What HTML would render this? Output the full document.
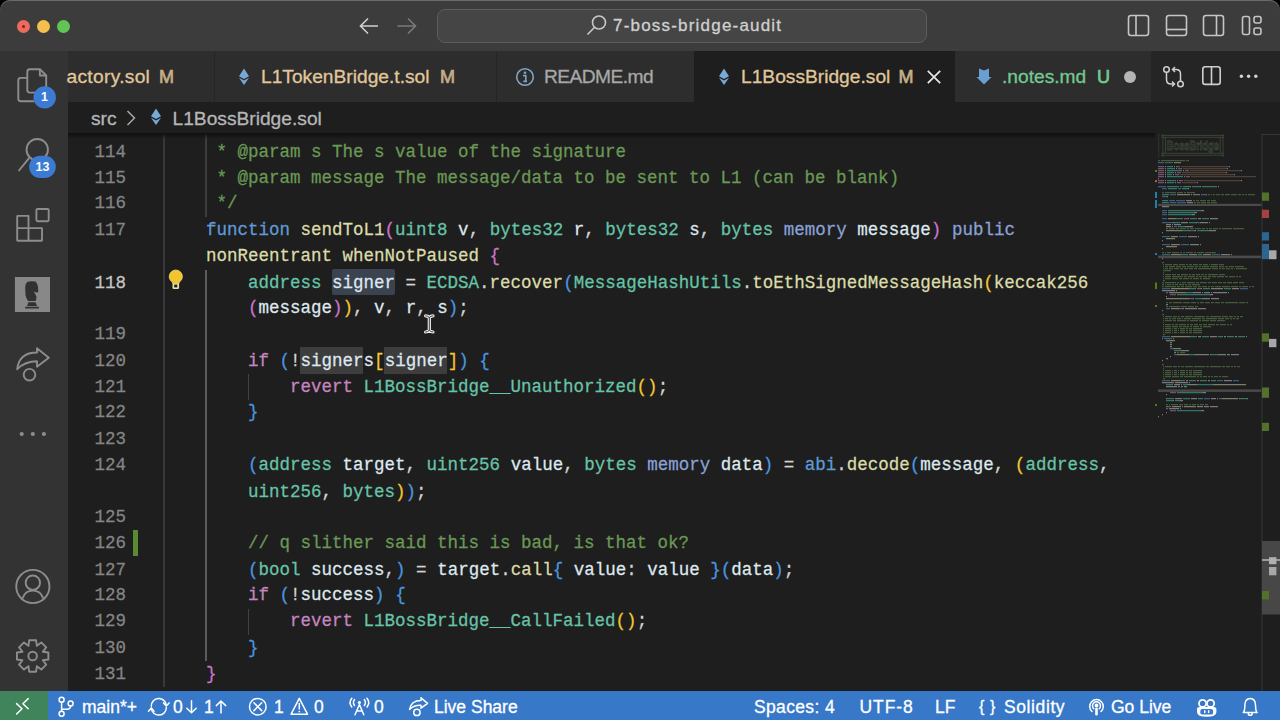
<!DOCTYPE html>
<html><head><meta charset="utf-8">
<style>
*{margin:0;padding:0;box-sizing:border-box}
html,body{width:1280px;height:720px;overflow:hidden;background:#000;font-family:"Liberation Sans",sans-serif}
.tab,#crumb,.st,#title div{-webkit-text-stroke:0.3px currentColor}
.code,.ln{-webkit-text-stroke:0.25px currentColor}
.abs{position:absolute}
#title{left:0;top:0;width:1280px;height:51px;background:#3c3c3c;border-radius:10px 10px 0 0;box-shadow:inset 0 1px 0 #6a6a6a}
#act{left:0;top:51px;width:68px;height:640px;background:#333333}
#tabs{left:68px;top:51px;width:1212px;height:51px;background:#252526}
.tab{position:absolute;top:0;height:51px;background:#2d2d2d;color:#e0c79b;font-size:19.2px;white-space:nowrap}
.tab .lbl{position:absolute;top:15px}
.tab .dm{font-size:18px;top:16px;-webkit-text-stroke:0.7px currentColor}
#crumb{left:68px;top:102px;width:1212px;height:32px;background:#1e1e1e;color:#b6b6b6;font-size:19.2px}
#editor{left:68px;top:134px;width:1212px;height:557px;background:#1e1e1e;overflow:hidden}
#shadow{left:68px;top:133px;width:1087px;height:6px;background:linear-gradient(#0f0f0f,rgba(15,15,15,0))}
#status{left:0;top:691px;width:1280px;height:29px;background:#3778c8;color:#fff;font-size:17.3px}
.code{position:absolute;left:96px;white-space:pre;font-family:"Liberation Mono",monospace;font-size:17.5px;line-height:23.727px;color:#d4d4d4;transform:scaleY(1.1);transform-origin:0 0}
.ln{position:absolute;left:0;white-space:pre;width:58px;text-align:right;font-family:"Liberation Mono",monospace;font-size:17.5px;line-height:23.727px;color:#858585;transform:scaleY(1.1);transform-origin:0 0}
.c{color:#6a9955}.k{color:#5f9bd6}.m{color:#8aa2d8}.t{color:#66c4a8}.f{color:#dcdcaa}.p{color:#c586c0}
.b1{color:#f2c830}.b2{color:#cc74cc}.b3{color:#4a96e0}.v{color:#dfe8ef}
.st{top:697px;color:#fff;font-size:17.5px;line-height:20px;white-space:pre}
.guide{position:absolute;width:1px;background:#404040}
.hl{background:#3a3d41;border-radius:2px}
</style></head><body>
<div id="title" class="abs">
<div class="abs" style="left:17px;top:20px;width:13px;height:13px;border-radius:50%;background:#ed6a5e"></div><div class="abs" style="left:21.8px;top:24.6px;width:3.4px;height:3.4px;border-radius:50%;background:#8c1c12"></div>
<div class="abs" style="left:37px;top:20px;width:13px;height:13px;border-radius:50%;background:#f4bf4f"></div>
<div class="abs" style="left:57px;top:20px;width:13px;height:13px;border-radius:50%;background:#61c554"></div>
<svg class="abs" style="left:358px;top:16px" width="22" height="20" viewBox="0 0 22 20"><path d="M20 10H3M10 2.5L2.5 10L10 17.5" stroke="#cfcfcf" stroke-width="1.6" fill="none"/></svg>
<svg class="abs" style="left:396px;top:16px" width="22" height="20" viewBox="0 0 22 20"><path d="M1.5 10H19M12 2.5L19.5 10L12 17.5" stroke="#7a7a7a" stroke-width="1.6" fill="none"/></svg>
<div class="abs" style="left:437px;top:8.5px;width:490px;height:34px;border-radius:8px;background:#454545;border:1px solid #5d5d5d"></div>
<svg class="abs" style="left:586px;top:14px" width="22" height="22" viewBox="0 0 22 22"><circle cx="13" cy="8.5" r="6.5" stroke="#c8c8c8" stroke-width="1.6" fill="none"/><path d="M8.6 13.2L1.5 20.5" stroke="#c8c8c8" stroke-width="1.6"/></svg>
<div class="abs" style="left:613px;top:15.5px;color:#d0d0d0;font-size:17px;letter-spacing:1.2px;white-space:nowrap">7-boss-bridge-audit</div>
<svg class="abs" style="left:1127px;top:14px" width="24" height="23" viewBox="0 0 24 23"><rect x="1.5" y="1.5" width="20" height="20" rx="2.5" stroke="#c5c5c5" stroke-width="1.6" fill="none"/><path d="M9 1.5V21.5" stroke="#c5c5c5" stroke-width="1.6"/></svg>
<svg class="abs" style="left:1165px;top:14px" width="24" height="23" viewBox="0 0 24 23"><rect x="1.5" y="1.5" width="20" height="20" rx="2.5" stroke="#c5c5c5" stroke-width="1.6" fill="none"/><path d="M1.5 15.5H21.5" stroke="#c5c5c5" stroke-width="1.6"/></svg>
<svg class="abs" style="left:1202px;top:14px" width="24" height="23" viewBox="0 0 24 23"><rect x="1.5" y="1.5" width="20" height="20" rx="2.5" stroke="#c5c5c5" stroke-width="1.6" fill="none"/><path d="M14.5 1.5V21.5" stroke="#c5c5c5" stroke-width="1.6"/></svg>
<svg class="abs" style="left:1241px;top:15px" width="23" height="22" viewBox="0 0 23 22"><rect x="1.5" y="1.5" width="7" height="18" rx="2" stroke="#c5c5c5" stroke-width="1.6" fill="none"/><rect x="13" y="1.5" width="7" height="6.5" rx="2" stroke="#c5c5c5" stroke-width="1.6" fill="none"/><rect x="13" y="13" width="7" height="6.5" rx="2" stroke="#c5c5c5" stroke-width="1.6" fill="none"/></svg>
</div>
<div id="act" class="abs"></div>
<svg class="abs" style="left:0;top:0" width="68" height="720" viewBox="0 0 68 720">
<g stroke="#8d8d8d" stroke-width="1.9" fill="none" stroke-linejoin="round">
<path d="M27.3 71.7Q27.3 69.2 29.8 69.2H39.9L46.2 75.5V90.1Q46.2 92.6 43.7 92.6H29.8Q27.3 92.6 27.3 90.1Z"/>
<path d="M39.9 69.2V75.5H46.2"/>
<path d="M27.3 77.9H20.8Q18.3 77.9 18.3 80.4V98.8Q18.3 101.3 20.8 101.3H34"/>
<circle cx="37.25" cy="149.65" r="10.7"/>
<path d="M29.3 157.9L18.6 171"/>
<path d="M17.2 216.4Q17.2 215.9 17.7 215.9H28.5V240.7H17.7Q17.2 240.7 17.2 240.2Z"/>
<path d="M17.2 228.1H42V240.2Q42 240.7 41.5 240.7H28.5"/>
<rect x="36.4" y="209" width="12.3" height="12.3" rx="1.2"/>
<path d="M17.2 369.2Q19 352.5 37 352.5V348.3L48.8 357.7L37 366.7V361.3Q25 361.3 17.2 369.2Z"/>
<circle cx="29.5" cy="374.7" r="5.8"/>
<circle cx="32.85" cy="586.5" r="16.6"/>
<circle cx="32.85" cy="582.7" r="7.2"/>
<path d="M22.5 598.3Q25 590.6 32.85 590.6Q40.7 590.6 43.2 598.3"/>
<path d="M29.17 640.28 L36.13 640.28 L36.86 645.84 L41.30 642.42 L46.23 647.35 L42.81 651.79 L48.37 652.52 L48.37 659.48 L42.81 660.21 L46.23 664.65 L41.30 669.58 L36.86 666.16 L36.13 671.72 L29.17 671.72 L28.44 666.16 L24.00 669.58 L19.07 664.65 L22.49 660.21 L16.93 659.48 L16.93 652.52 L22.49 651.79 L19.07 647.35 L24.00 642.42 L28.44 645.84Z"/>
<circle cx="32.65" cy="656" r="4.3"/>
</g>
<g fill="#8d8d8d"><circle cx="21.7" cy="434" r="2.1"/><circle cx="32.8" cy="434" r="2.1"/><circle cx="43.9" cy="434" r="2.1"/></g>
<rect x="14.9" y="277" width="35.1" height="35" fill="#888888"/>
<path d="M27.5 281.8Q31 280.6 35.5 281.6Q38 284 38.2 289.8L38.2 292Q37.5 292.6 36 292.4L33.5 291.6Q35 293.5 36.4 296.5Q36.6 299 35.6 301L28 301Q26 298 25.5 295L25.2 287Q25.4 283.5 27.5 281.8ZM28.4 302.3H35.5L37 305.9H27.1ZM25.2 306.8H38.9V308.5H25.2Z" fill="#313131"/>
<circle cx="44.7" cy="97.4" r="11.2" fill="#3b7bd3"/>
<rect x="29.1" y="155.7" width="26.7" height="22.2" rx="11.1" fill="#3b7bd3"/>
</svg>
<div class="abs" style="left:33px;top:88px;width:23px;text-align:center;color:#fff;font-size:12.5px;font-weight:bold;line-height:18px">1</div>
<div class="abs" style="left:29px;top:158px;width:27px;text-align:center;color:#fff;font-size:12.5px;font-weight:bold;line-height:18px">13</div>
<div id="tabs" class="abs">
<div class="tab" style="left:0;width:146px"><span class="lbl" style="left:-1.5px;letter-spacing:0.3px">actory.sol</span><span class="lbl dm" style="left:91px;color:#c5ae86">M</span></div>
<div class="tab" style="left:147px;width:281px"><svg class="abs" style="left:23px;top:17px" width="12" height="18" viewBox="0 0 12 18"><path d="M6 0.5L11 8.3L6 11L1 8.3Z" fill="#76a9d6"/><path d="M1 9.8L6 12.6L11 9.8L6 17Z" fill="#76a9d6"/></svg><span class="lbl" style="left:193px;display:none"></span><span class="lbl" style="left:46px">L1TokenBridge.t.sol</span><span class="lbl dm" style="left:225px;color:#c5ae86">M</span></div>
<div class="tab" style="left:429px;width:198px;color:#a8a8a8"><svg class="abs" style="left:18px;top:16px" width="20" height="20" viewBox="0 0 20 20"><circle cx="10" cy="10" r="8.3" stroke="#7fa4c6" stroke-width="1.6" fill="none"/><circle cx="10" cy="5.8" r="1.3" fill="#7fa4c6"/><path d="M8 8.6H10.8V14.2M8.3 14.4H12" stroke="#7fa4c6" stroke-width="1.6" fill="none"/></svg><span class="lbl" style="left:47px;letter-spacing:-0.55px">README.md</span></div>
<div class="tab" style="left:626px;width:261px;background:#1e1e1e"><svg class="abs" style="left:24px;top:17px" width="12" height="18" viewBox="0 0 12 18"><path d="M6 0.5L11 8.3L6 11L1 8.3Z" fill="#76a9d6"/><path d="M1 9.8L6 12.6L11 9.8L6 17Z" fill="#76a9d6"/></svg><span class="lbl" style="left:47px">L1BossBridge.sol</span><span class="lbl dm" style="left:204.5px;color:#c5ae86">M</span><svg class="abs" style="left:233px;top:19px" width="14" height="14" viewBox="0 0 14 14"><path d="M0.8 0.8L13.2 13.2M13.2 0.8L0.8 13.2" stroke="#e8e8e8" stroke-width="1.7"/></svg></div>
<div class="tab" style="left:887px;width:196px;color:#73c991"><svg class="abs" style="left:21px;top:17px" width="16" height="17" viewBox="0 0 16 17"><path d="M3 0.5L8 2.5L13 0.5V9H15.5L8 16.5L0.5 9H3Z" fill="#6a9fd2"/></svg><span class="lbl" style="left:47px">.notes.md</span><span class="lbl dm" style="left:142px;color:#73c991">U</span><div class="abs" style="left:169px;top:20px;width:12px;height:12px;border-radius:50%;background:#b5b5b5"></div></div>
<svg class="abs" style="left:1094px;top:14px" width="24" height="24" viewBox="0 0 24 24"><circle cx="4.5" cy="4.5" r="2.8" stroke="#cfcfcf" stroke-width="1.5" fill="none"/><circle cx="18.5" cy="19" r="2.8" stroke="#cfcfcf" stroke-width="1.5" fill="none"/><path d="M4.5 7.3V14.5Q4.5 19 9 19H12M10 16.5L12.5 19L10 21.5M18.5 16.2V9Q18.5 4.5 14 4.5H11M13 2L10.5 4.5L13 7" stroke="#cfcfcf" stroke-width="1.5" fill="none"/></svg>
<svg class="abs" style="left:1133px;top:14px" width="22" height="22" viewBox="0 0 22 22"><rect x="1.8" y="1.8" width="17.4" height="17.6" rx="2.5" stroke="#cfcfcf" stroke-width="1.6" fill="none"/><path d="M10.5 1.8V19.4" stroke="#cfcfcf" stroke-width="1.6"/></svg>
<svg class="abs" style="left:1170px;top:23px" width="22" height="5" viewBox="0 0 22 5"><circle cx="3.4" cy="2.3" r="1.7" fill="#d4d4d4"/><circle cx="10.6" cy="2.3" r="1.7" fill="#d4d4d4"/><circle cx="17.8" cy="2.3" r="1.7" fill="#d4d4d4"/></svg>
</div>
<div id="crumb" class="abs"><span class="abs" style="left:23px;top:6px">src</span><svg class="abs" style="left:57.5px;top:8px" width="10" height="16" viewBox="0 0 10 16"><path d="M1.5 1L8.5 8L1.5 15" stroke="#a9a9a9" stroke-width="1.5" fill="none"/></svg><svg class="abs" style="left:82px;top:6px" width="12" height="18" viewBox="0 0 12 18"><path d="M6 0.5L11 8.3L6 11L1 8.3Z" fill="#76a9d6"/><path d="M1 9.8L6 12.6L11 9.8L6 17Z" fill="#76a9d6"/></svg><span class="abs" style="left:104.5px;top:6px">L1BossBridge.sol</span></div>
<div id="editor" class="abs">
<div class="guide" style="left:95px;top:0;height:553px;width:2px;background:#383838"></div>
<div class="guide" style="left:137px;top:0;height:83.3px;width:1.5px;background:#3c3c3c"></div>
<div class="guide" style="left:137px;top:135.5px;height:391.5px;width:2px;background:#5c5c5c"></div>
<div class="guide" style="left:179.5px;top:239.9px;height:26.1px;width:1.5px;background:#424242"></div>
<div class="guide" style="left:179.5px;top:474.8px;height:26.1px;width:1.5px;background:#424242"></div>
<div class="abs" style="left:264.0px;top:134.9px;width:63.0px;height:26.6px;background:#3c4350;border-radius:2px"></div>
<div class="abs" style="left:231.8px;top:213.2px;width:63.0px;height:26.6px;background:#3d3d3e"></div>
<div class="abs" style="left:315.8px;top:213.2px;width:63.0px;height:26.6px;background:#3d3d3e"></div>
<div class="abs" style="left:65px;top:396.0px;width:5px;height:26px;background:#5a8a32"></div>

<div class="ln" style="top:5px">114
115
116
117

<span style="color:#c6c6c6">118</span>

119
120
121
122
123
124

125
126
127
128
129
130
131</div>
<div class="code" style="top:5px">     <span class="c">* @param s The s value of the signature</span>
     <span class="c">* @param message The message/data to be sent to L1 (can be blank)</span>
     <span class="c">*/</span>
    <span class="k">function</span> <span class="f">sendToL1</span><span class="b2">(</span><span class="t">uint8</span> <span class="v">v</span>, <span class="t">bytes32</span> <span class="v">r</span>, <span class="t">bytes32</span> <span class="v">s</span>, <span class="t">bytes</span> <span class="m">memory</span> <span class="v">message</span><span class="b2">)</span> <span class="m">public</span>
    <span class="f">nonReentrant</span> <span class="f">whenNotPaused</span> <span class="b2">{</span>
        <span class="t">address</span> <span class="v">signer</span> = <span class="t">ECDSA</span>.<span class="f">recover</span><span class="b3">(</span><span class="t">MessageHashUtils</span>.<span class="f">toEthSignedMessageHash</span><span class="b1">(</span><span class="f">keccak256</span>
        <span class="b2">(</span><span class="v">message</span><span class="b2">)</span><span class="b1">)</span>, <span class="v">v</span>, <span class="v">r</span>, <span class="v">s</span><span class="b3">)</span>;

        <span class="p">if</span> <span class="b3">(</span>!<span class="v">signer</span><span class="v">s</span><span class="b1">[</span><span class="v">signer</span><span class="b1">]</span><span class="b3">)</span> <span class="b3">{</span>
            <span class="p">revert</span> <span class="t">L1BossBridge__Unauthorized</span><span class="b1">()</span>;
        <span class="b3">}</span>

        <span class="b3">(</span><span class="t">address</span> <span class="v">target</span>, <span class="t">uint256</span> <span class="v">value</span>, <span class="t">bytes</span> <span class="m">memory</span> <span class="v">data</span><span class="b3">)</span> = <span class="k">abi</span>.<span class="f">decode</span><span class="b3">(</span><span class="v">message</span>, <span class="b1">(</span><span class="t">address</span>,
        <span class="t">uint256</span>, <span class="t">bytes</span><span class="b1">)</span><span class="b3">)</span>;

        <span class="c">// q slither said this is bad, is that ok?</span>
        <span class="b3">(</span><span class="t">bool</span> <span class="v">success</span>,<span class="b3">)</span> = <span class="v">target</span>.<span class="f">call</span><span class="b3">{</span> <span class="v">value</span>: <span class="v">value</span> <span class="b3">}</span><span class="b3">(</span><span class="v">data</span><span class="b3">)</span>;
        <span class="p">if</span> <span class="b3">(</span>!<span class="v">success</span><span class="b3">)</span> <span class="b3">{</span>
            <span class="p">revert</span> <span class="t">L1BossBridge__CallFailed</span><span class="b1">()</span>;
        <span class="b3">}</span>
    <span class="b2">}</span></div>
</div>
<svg class="abs" style="left:1150px;top:133px;opacity:0.5" width="112" height="290" viewBox="1150 133 112 290"><path fill="#6a9955" d="M1158.0 160.0h2.0v1.3h-2.0zM1161.0 160.0h24.0v1.3h-24.0zM1186.0 160.0h3.0v1.3h-3.0zM1162.0 192.0h2.0v1.3h-2.0zM1165.0 192.0h11.0v1.3h-11.0zM1177.0 192.0h6.0v1.3h-6.0zM1184.0 192.0h2.0v1.3h-2.0zM1187.0 192.0h8.0v1.3h-8.0zM1208.0 194.0h2.0v1.3h-2.0zM1211.0 194.0h1.0v1.3h-1.0zM1213.0 194.0h2.0v1.3h-2.0zM1216.0 194.0h4.0v1.3h-4.0zM1221.0 194.0h3.0v1.3h-3.0zM1225.0 194.0h5.0v1.3h-5.0zM1231.0 194.0h6.0v1.3h-6.0zM1238.0 194.0h3.0v1.3h-3.0zM1242.0 194.0h2.0v1.3h-2.0zM1245.0 194.0h2.0v1.3h-2.0zM1248.0 194.0h7.0v1.3h-7.0zM1193.0 200.0h2.0v1.3h-2.0zM1196.0 200.0h3.0v1.3h-3.0zM1200.0 200.0h6.0v1.3h-6.0zM1207.0 200.0h3.0v1.3h-3.0zM1211.0 200.0h5.0v1.3h-5.0zM1194.0 202.0h2.0v1.3h-2.0zM1197.0 202.0h3.0v1.3h-3.0zM1201.0 202.0h5.0v1.3h-5.0zM1207.0 202.0h3.0v1.3h-3.0zM1211.0 202.0h6.0v1.3h-6.0zM1220.0 204.0h2.0v1.3h-2.0zM1223.0 204.0h5.0v1.3h-5.0zM1229.0 204.0h3.0v1.3h-3.0zM1233.0 204.0h3.0v1.3h-3.0zM1237.0 204.0h4.0v1.3h-4.0zM1242.0 204.0h10.0v1.3h-10.0zM1253.0 204.0h2.0v1.3h-2.0zM1256.0 204.0h3.0v1.3h-3.0zM1166.0 228.0h2.0v1.3h-2.0zM1169.0 228.0h6.0v1.3h-6.0zM1176.0 228.0h3.0v1.3h-3.0zM1180.0 228.0h6.0v1.3h-6.0zM1187.0 228.0h2.0v1.3h-2.0zM1190.0 228.0h4.0v1.3h-4.0zM1195.0 228.0h6.0v1.3h-6.0zM1202.0 228.0h3.0v1.3h-3.0zM1206.0 228.0h2.0v1.3h-2.0zM1209.0 228.0h3.0v1.3h-3.0zM1213.0 228.0h5.0v1.3h-5.0zM1219.0 228.0h2.0v1.3h-2.0zM1222.0 228.0h10.0v1.3h-10.0zM1233.0 228.0h11.0v1.3h-11.0zM1162.0 252.0h2.0v1.3h-2.0zM1165.0 252.0h1.0v1.3h-1.0zM1167.0 252.0h4.0v1.3h-4.0zM1172.0 252.0h7.0v1.3h-7.0zM1180.0 252.0h2.0v1.3h-2.0zM1183.0 252.0h2.0v1.3h-2.0zM1186.0 252.0h7.0v1.3h-7.0zM1194.0 252.0h2.0v1.3h-2.0zM1197.0 252.0h7.0v1.3h-7.0zM1205.0 252.0h11.0v1.3h-11.0zM1162.0 262.0h2.0v1.3h-2.0zM1163.0 264.0h1.0v1.3h-1.0zM1165.0 264.0h7.0v1.3h-7.0zM1173.0 264.0h5.0v1.3h-5.0zM1179.0 264.0h6.0v1.3h-6.0zM1186.0 264.0h2.0v1.3h-2.0zM1189.0 264.0h3.0v1.3h-3.0zM1193.0 264.0h5.0v1.3h-5.0zM1199.0 264.0h3.0v1.3h-3.0zM1203.0 264.0h5.0v1.3h-5.0zM1209.0 264.0h1.0v1.3h-1.0zM1211.0 264.0h7.0v1.3h-7.0zM1219.0 264.0h5.0v1.3h-5.0zM1163.0 266.0h1.0v1.3h-1.0zM1165.0 266.0h3.0v1.3h-3.0zM1169.0 266.0h6.0v1.3h-6.0zM1176.0 266.0h5.0v1.3h-5.0zM1182.0 266.0h4.0v1.3h-4.0zM1187.0 266.0h7.0v1.3h-7.0zM1195.0 266.0h3.0v1.3h-3.0zM1199.0 266.0h2.0v1.3h-2.0zM1202.0 266.0h7.0v1.3h-7.0zM1210.0 266.0h8.0v1.3h-8.0zM1219.0 266.0h5.0v1.3h-5.0zM1225.0 266.0h3.0v1.3h-3.0zM1229.0 266.0h5.0v1.3h-5.0zM1235.0 266.0h9.0v1.3h-9.0zM1163.0 268.0h1.0v1.3h-1.0zM1165.0 268.0h3.0v1.3h-3.0zM1169.0 268.0h4.0v1.3h-4.0zM1174.0 268.0h5.0v1.3h-5.0zM1180.0 268.0h3.0v1.3h-3.0zM1184.0 268.0h4.0v1.3h-4.0zM1189.0 268.0h4.0v1.3h-4.0zM1194.0 268.0h3.0v1.3h-3.0zM1198.0 268.0h13.0v1.3h-13.0zM1212.0 268.0h6.0v1.3h-6.0zM1219.0 268.0h2.0v1.3h-2.0zM1222.0 268.0h3.0v1.3h-3.0zM1226.0 268.0h4.0v1.3h-4.0zM1231.0 268.0h2.0v1.3h-2.0zM1234.0 268.0h1.0v1.3h-1.0zM1236.0 268.0h11.0v1.3h-11.0zM1163.0 270.0h8.0v1.3h-8.0zM1163.0 272.0h1.0v1.3h-1.0zM1163.0 274.0h1.0v1.3h-1.0zM1165.0 274.0h6.0v1.3h-6.0zM1172.0 274.0h4.0v1.3h-4.0zM1177.0 274.0h3.0v1.3h-3.0zM1181.0 274.0h7.0v1.3h-7.0zM1189.0 274.0h2.0v1.3h-2.0zM1192.0 274.0h3.0v1.3h-3.0zM1196.0 274.0h4.0v1.3h-4.0zM1201.0 274.0h3.0v1.3h-3.0zM1205.0 274.0h2.0v1.3h-2.0zM1208.0 274.0h10.0v1.3h-10.0zM1219.0 274.0h6.0v1.3h-6.0zM1163.0 276.0h1.0v1.3h-1.0zM1165.0 276.0h6.0v1.3h-6.0zM1172.0 276.0h11.0v1.3h-11.0zM1184.0 276.0h3.0v1.3h-3.0zM1188.0 276.0h7.0v1.3h-7.0zM1196.0 276.0h2.0v1.3h-2.0zM1199.0 276.0h3.0v1.3h-3.0zM1203.0 276.0h4.0v1.3h-4.0zM1208.0 276.0h3.0v1.3h-3.0zM1212.0 276.0h4.0v1.3h-4.0zM1217.0 276.0h7.0v1.3h-7.0zM1225.0 276.0h3.0v1.3h-3.0zM1229.0 276.0h6.0v1.3h-6.0zM1236.0 276.0h2.0v1.3h-2.0zM1239.0 276.0h2.0v1.3h-2.0zM1163.0 278.0h1.0v1.3h-1.0zM1165.0 278.0h6.0v1.3h-6.0zM1172.0 278.0h6.0v1.3h-6.0zM1179.0 278.0h3.0v1.3h-3.0zM1183.0 278.0h6.0v1.3h-6.0zM1190.0 278.0h2.0v1.3h-2.0zM1193.0 278.0h6.0v1.3h-6.0zM1200.0 278.0h2.0v1.3h-2.0zM1203.0 278.0h7.0v1.3h-7.0zM1163.0 280.0h2.0v1.3h-2.0zM1162.0 282.0h2.0v1.3h-2.0zM1165.0 282.0h11.0v1.3h-11.0zM1177.0 282.0h2.0v1.3h-2.0zM1180.0 282.0h1.0v1.3h-1.0zM1182.0 282.0h4.0v1.3h-4.0zM1187.0 282.0h8.0v1.3h-8.0zM1196.0 282.0h3.0v1.3h-3.0zM1200.0 282.0h7.0v1.3h-7.0zM1208.0 282.0h3.0v1.3h-3.0zM1212.0 282.0h5.0v1.3h-5.0zM1218.0 282.0h4.0v1.3h-4.0zM1223.0 282.0h3.0v1.3h-3.0zM1227.0 282.0h5.0v1.3h-5.0zM1233.0 282.0h5.0v1.3h-5.0zM1239.0 282.0h5.0v1.3h-5.0zM1162.0 284.0h2.0v1.3h-2.0zM1165.0 284.0h1.0v1.3h-1.0zM1167.0 284.0h4.0v1.3h-4.0zM1172.0 284.0h2.0v1.3h-2.0zM1175.0 284.0h3.0v1.3h-3.0zM1179.0 284.0h5.0v1.3h-5.0zM1185.0 284.0h2.0v1.3h-2.0zM1188.0 284.0h3.0v1.3h-3.0zM1192.0 284.0h8.0v1.3h-8.0zM1162.0 286.0h2.0v1.3h-2.0zM1165.0 286.0h11.0v1.3h-11.0zM1177.0 286.0h3.0v1.3h-3.0zM1181.0 286.0h3.0v1.3h-3.0zM1185.0 286.0h7.0v1.3h-7.0zM1193.0 286.0h4.0v1.3h-4.0zM1198.0 286.0h3.0v1.3h-3.0zM1202.0 286.0h5.0v1.3h-5.0zM1208.0 286.0h2.0v1.3h-2.0zM1211.0 286.0h3.0v1.3h-3.0zM1215.0 286.0h6.0v1.3h-6.0zM1222.0 286.0h8.0v1.3h-8.0zM1231.0 286.0h7.0v1.3h-7.0zM1239.0 286.0h2.0v1.3h-2.0zM1242.0 286.0h6.0v1.3h-6.0zM1249.0 286.0h2.0v1.3h-2.0zM1252.0 286.0h2.0v1.3h-2.0zM1166.0 302.0h2.0v1.3h-2.0zM1169.0 302.0h3.0v1.3h-3.0zM1173.0 302.0h9.0v1.3h-9.0zM1183.0 302.0h7.0v1.3h-7.0zM1191.0 302.0h5.0v1.3h-5.0zM1197.0 302.0h2.0v1.3h-2.0zM1200.0 302.0h4.0v1.3h-4.0zM1205.0 302.0h5.0v1.3h-5.0zM1211.0 302.0h3.0v1.3h-3.0zM1215.0 302.0h5.0v1.3h-5.0zM1221.0 302.0h3.0v1.3h-3.0zM1225.0 302.0h13.0v1.3h-13.0zM1239.0 302.0h6.0v1.3h-6.0zM1246.0 302.0h2.0v1.3h-2.0zM1166.0 306.0h2.0v1.3h-2.0zM1169.0 306.0h11.0v1.3h-11.0zM1181.0 306.0h6.0v1.3h-6.0zM1188.0 306.0h6.0v1.3h-6.0zM1195.0 306.0h3.0v1.3h-3.0zM1162.0 314.0h2.0v1.3h-2.0zM1163.0 316.0h1.0v1.3h-1.0zM1165.0 316.0h7.0v1.3h-7.0zM1173.0 316.0h4.0v1.3h-4.0zM1178.0 316.0h2.0v1.3h-2.0zM1181.0 316.0h3.0v1.3h-3.0zM1185.0 316.0h8.0v1.3h-8.0zM1194.0 316.0h11.0v1.3h-11.0zM1206.0 316.0h3.0v1.3h-3.0zM1210.0 316.0h11.0v1.3h-11.0zM1222.0 316.0h6.0v1.3h-6.0zM1229.0 316.0h4.0v1.3h-4.0zM1234.0 316.0h2.0v1.3h-2.0zM1237.0 316.0h2.0v1.3h-2.0zM1240.0 316.0h3.0v1.3h-3.0zM1163.0 318.0h1.0v1.3h-1.0zM1165.0 318.0h3.0v1.3h-3.0zM1169.0 318.0h2.0v1.3h-2.0zM1172.0 318.0h4.0v1.3h-4.0zM1177.0 318.0h4.0v1.3h-4.0zM1182.0 318.0h1.0v1.3h-1.0zM1184.0 318.0h7.0v1.3h-7.0zM1192.0 318.0h9.0v1.3h-9.0zM1202.0 318.0h3.0v1.3h-3.0zM1206.0 318.0h11.0v1.3h-11.0zM1218.0 318.0h6.0v1.3h-6.0zM1225.0 318.0h4.0v1.3h-4.0zM1230.0 318.0h2.0v1.3h-2.0zM1233.0 318.0h2.0v1.3h-2.0zM1236.0 318.0h3.0v1.3h-3.0zM1163.0 320.0h1.0v1.3h-1.0zM1165.0 320.0h7.0v1.3h-7.0zM1173.0 320.0h3.0v1.3h-3.0zM1177.0 320.0h9.0v1.3h-9.0zM1187.0 320.0h2.0v1.3h-2.0zM1190.0 320.0h8.0v1.3h-8.0zM1199.0 320.0h2.0v1.3h-2.0zM1202.0 320.0h7.0v1.3h-7.0zM1210.0 320.0h6.0v1.3h-6.0zM1217.0 320.0h8.0v1.3h-8.0zM1163.0 322.0h1.0v1.3h-1.0zM1163.0 324.0h1.0v1.3h-1.0zM1165.0 324.0h6.0v1.3h-6.0zM1172.0 324.0h2.0v1.3h-2.0zM1175.0 324.0h3.0v1.3h-3.0zM1179.0 324.0h7.0v1.3h-7.0zM1187.0 324.0h2.0v1.3h-2.0zM1190.0 324.0h3.0v1.3h-3.0zM1194.0 324.0h4.0v1.3h-4.0zM1199.0 324.0h3.0v1.3h-3.0zM1203.0 324.0h4.0v1.3h-4.0zM1208.0 324.0h7.0v1.3h-7.0zM1216.0 324.0h3.0v1.3h-3.0zM1220.0 324.0h6.0v1.3h-6.0zM1227.0 324.0h2.0v1.3h-2.0zM1230.0 324.0h2.0v1.3h-2.0zM1163.0 326.0h1.0v1.3h-1.0zM1165.0 326.0h6.0v1.3h-6.0zM1172.0 326.0h6.0v1.3h-6.0zM1179.0 326.0h3.0v1.3h-3.0zM1183.0 326.0h6.0v1.3h-6.0zM1190.0 326.0h2.0v1.3h-2.0zM1193.0 326.0h6.0v1.3h-6.0zM1200.0 326.0h2.0v1.3h-2.0zM1203.0 326.0h8.0v1.3h-8.0zM1163.0 328.0h1.0v1.3h-1.0zM1165.0 328.0h6.0v1.3h-6.0zM1172.0 328.0h1.0v1.3h-1.0zM1174.0 328.0h3.0v1.3h-3.0zM1178.0 328.0h1.0v1.3h-1.0zM1180.0 328.0h5.0v1.3h-5.0zM1186.0 328.0h2.0v1.3h-2.0zM1189.0 328.0h3.0v1.3h-3.0zM1193.0 328.0h9.0v1.3h-9.0zM1163.0 330.0h1.0v1.3h-1.0zM1165.0 330.0h6.0v1.3h-6.0zM1172.0 330.0h1.0v1.3h-1.0zM1174.0 330.0h3.0v1.3h-3.0zM1178.0 330.0h1.0v1.3h-1.0zM1180.0 330.0h5.0v1.3h-5.0zM1186.0 330.0h2.0v1.3h-2.0zM1189.0 330.0h3.0v1.3h-3.0zM1193.0 330.0h9.0v1.3h-9.0zM1163.0 332.0h1.0v1.3h-1.0zM1165.0 332.0h6.0v1.3h-6.0zM1172.0 332.0h1.0v1.3h-1.0zM1174.0 332.0h3.0v1.3h-3.0zM1178.0 332.0h1.0v1.3h-1.0zM1180.0 332.0h5.0v1.3h-5.0zM1186.0 332.0h2.0v1.3h-2.0zM1189.0 332.0h3.0v1.3h-3.0zM1193.0 332.0h9.0v1.3h-9.0zM1163.0 334.0h2.0v1.3h-2.0zM1177.0 352.0h2.0v1.3h-2.0zM1180.0 352.0h5.0v1.3h-5.0zM1162.0 364.0h2.0v1.3h-2.0zM1163.0 366.0h1.0v1.3h-1.0zM1165.0 366.0h7.0v1.3h-7.0zM1173.0 366.0h4.0v1.3h-4.0zM1178.0 366.0h2.0v1.3h-2.0zM1181.0 366.0h3.0v1.3h-3.0zM1185.0 366.0h8.0v1.3h-8.0zM1194.0 366.0h11.0v1.3h-11.0zM1206.0 366.0h3.0v1.3h-3.0zM1210.0 366.0h11.0v1.3h-11.0zM1222.0 366.0h3.0v1.3h-3.0zM1226.0 366.0h4.0v1.3h-4.0zM1231.0 366.0h2.0v1.3h-2.0zM1234.0 366.0h2.0v1.3h-2.0zM1237.0 366.0h3.0v1.3h-3.0zM1163.0 368.0h1.0v1.3h-1.0zM1163.0 370.0h1.0v1.3h-1.0zM1165.0 370.0h6.0v1.3h-6.0zM1172.0 370.0h1.0v1.3h-1.0zM1174.0 370.0h3.0v1.3h-3.0zM1178.0 370.0h1.0v1.3h-1.0zM1180.0 370.0h5.0v1.3h-5.0zM1186.0 370.0h2.0v1.3h-2.0zM1189.0 370.0h3.0v1.3h-3.0zM1193.0 370.0h9.0v1.3h-9.0zM1163.0 372.0h1.0v1.3h-1.0zM1165.0 372.0h6.0v1.3h-6.0zM1172.0 372.0h1.0v1.3h-1.0zM1174.0 372.0h3.0v1.3h-3.0zM1178.0 372.0h1.0v1.3h-1.0zM1180.0 372.0h5.0v1.3h-5.0zM1186.0 372.0h2.0v1.3h-2.0zM1189.0 372.0h3.0v1.3h-3.0zM1193.0 372.0h9.0v1.3h-9.0zM1163.0 374.0h1.0v1.3h-1.0zM1165.0 374.0h6.0v1.3h-6.0zM1172.0 374.0h1.0v1.3h-1.0zM1174.0 374.0h3.0v1.3h-3.0zM1178.0 374.0h1.0v1.3h-1.0zM1180.0 374.0h5.0v1.3h-5.0zM1186.0 374.0h2.0v1.3h-2.0zM1189.0 374.0h3.0v1.3h-3.0zM1193.0 374.0h9.0v1.3h-9.0zM1163.0 376.0h1.0v1.3h-1.0zM1165.0 376.0h6.0v1.3h-6.0zM1172.0 376.0h7.0v1.3h-7.0zM1180.0 376.0h3.0v1.3h-3.0zM1184.0 376.0h12.0v1.3h-12.0zM1197.0 376.0h2.0v1.3h-2.0zM1200.0 376.0h2.0v1.3h-2.0zM1203.0 376.0h4.0v1.3h-4.0zM1208.0 376.0h2.0v1.3h-2.0zM1211.0 376.0h2.0v1.3h-2.0zM1214.0 376.0h4.0v1.3h-4.0zM1219.0 376.0h2.0v1.3h-2.0zM1222.0 376.0h6.0v1.3h-6.0zM1163.0 378.0h2.0v1.3h-2.0zM1166.0 404.0h2.0v1.3h-2.0zM1169.0 404.0h1.0v1.3h-1.0zM1171.0 404.0h7.0v1.3h-7.0zM1179.0 404.0h4.0v1.3h-4.0zM1184.0 404.0h4.0v1.3h-4.0zM1189.0 404.0h2.0v1.3h-2.0zM1192.0 404.0h4.0v1.3h-4.0zM1197.0 404.0h2.0v1.3h-2.0zM1200.0 404.0h4.0v1.3h-4.0zM1205.0 404.0h3.0v1.3h-3.0z"/><path fill="#569cd6" d="M1158.0 162.0h6.0v1.3h-6.0zM1165.0 162.0h8.0v1.3h-8.0zM1158.0 186.0h8.0v1.3h-8.0zM1180.0 186.0h2.0v1.3h-2.0zM1162.0 188.0h5.0v1.3h-5.0zM1178.0 188.0h3.0v1.3h-3.0zM1170.0 194.0h6.0v1.3h-6.0zM1201.0 194.0h5.0v1.3h-5.0zM1162.0 196.0h5.0v1.3h-5.0zM1169.0 200.0h6.0v1.3h-6.0zM1176.0 200.0h9.0v1.3h-9.0zM1170.0 202.0h6.0v1.3h-6.0zM1177.0 202.0h9.0v1.3h-9.0zM1162.0 204.0h7.0v1.3h-7.0zM1204.0 204.0h6.0v1.3h-6.0zM1162.0 210.0h5.0v1.3h-5.0zM1162.0 212.0h5.0v1.3h-5.0zM1162.0 214.0h5.0v1.3h-5.0zM1162.0 218.0h5.0v1.3h-5.0zM1162.0 222.0h11.0v1.3h-11.0zM1197.0 222.0h3.0v1.3h-3.0zM1174.0 226.0h3.0v1.3h-3.0zM1190.0 230.0h4.0v1.3h-4.0zM1197.0 230.0h4.0v1.3h-4.0zM1162.0 236.0h8.0v1.3h-8.0zM1179.0 236.0h8.0v1.3h-8.0zM1162.0 244.0h8.0v1.3h-8.0zM1181.0 244.0h8.0v1.3h-8.0zM1162.0 254.0h8.0v1.3h-8.0zM1212.0 254.0h8.0v1.3h-8.0zM1162.0 288.0h8.0v1.3h-8.0zM1240.0 288.0h8.0v1.3h-8.0zM1166.0 308.0h4.0v1.3h-4.0zM1162.0 336.0h8.0v1.3h-8.0zM1164.0 338.0h8.0v1.3h-8.0zM1170.0 348.0h3.0v1.3h-3.0zM1174.0 354.0h3.0v1.3h-3.0zM1162.0 380.0h8.0v1.3h-8.0zM1217.0 380.0h6.0v1.3h-6.0zM1233.0 380.0h6.0v1.3h-6.0zM1204.0 398.0h6.0v1.3h-6.0zM1219.0 398.0h3.0v1.3h-3.0z"/><path fill="#b5cea8" d="M1174.0 162.0h6.0v1.3h-6.0zM1193.0 194.0h7.0v1.3h-7.0zM1174.0 352.0h1.0v1.3h-1.0z"/><path fill="#d4d4d4" d="M1180.0 162.0h1.0v1.3h-1.0zM1165.0 166.0h1.0v1.3h-1.0zM1174.0 166.0h1.0v1.3h-1.0zM1229.0 166.0h1.0v1.3h-1.0zM1165.0 168.0h1.0v1.3h-1.0zM1176.0 168.0h1.0v1.3h-1.0zM1227.0 168.0h1.0v1.3h-1.0zM1165.0 170.0h1.0v1.3h-1.0zM1183.0 170.0h1.0v1.3h-1.0zM1241.0 170.0h1.0v1.3h-1.0zM1165.0 172.0h1.0v1.3h-1.0zM1175.0 172.0h1.0v1.3h-1.0zM1226.0 172.0h1.0v1.3h-1.0zM1165.0 174.0h1.0v1.3h-1.0zM1173.0 174.0h1.0v1.3h-1.0zM1234.0 174.0h1.0v1.3h-1.0zM1165.0 176.0h1.0v1.3h-1.0zM1184.0 176.0h1.0v1.3h-1.0zM1158.0 178.0h1.0v1.3h-1.0zM1165.0 180.0h1.0v1.3h-1.0zM1177.0 180.0h1.0v1.3h-1.0zM1241.0 180.0h1.0v1.3h-1.0zM1165.0 182.0h1.0v1.3h-1.0zM1175.0 182.0h1.0v1.3h-1.0zM1197.0 182.0h1.0v1.3h-1.0zM1190.0 186.0h1.0v1.3h-1.0zM1200.0 186.0h1.0v1.3h-1.0zM1218.0 186.0h1.0v1.3h-1.0zM1188.0 188.0h1.0v1.3h-1.0zM1191.0 194.0h1.0v1.3h-1.0zM1206.0 194.0h1.0v1.3h-1.0zM1167.0 196.0h1.0v1.3h-1.0zM1191.0 200.0h1.0v1.3h-1.0zM1192.0 202.0h1.0v1.3h-1.0zM1169.0 204.0h1.0v1.3h-1.0zM1186.0 204.0h2.0v1.3h-2.0zM1202.0 204.0h1.0v1.3h-1.0zM1218.0 204.0h1.0v1.3h-1.0zM1168.0 206.0h1.0v1.3h-1.0zM1201.0 210.0h3.0v1.3h-3.0zM1194.0 212.0h3.0v1.3h-3.0zM1192.0 214.0h3.0v1.3h-3.0zM1175.0 218.0h1.0v1.3h-1.0zM1188.0 218.0h1.0v1.3h-1.0zM1200.0 218.0h1.0v1.3h-1.0zM1216.0 218.0h2.0v1.3h-2.0zM1173.0 222.0h1.0v1.3h-1.0zM1187.0 222.0h1.0v1.3h-1.0zM1196.0 222.0h1.0v1.3h-1.0zM1200.0 222.0h1.0v1.3h-1.0zM1207.0 222.0h1.0v1.3h-1.0zM1209.0 222.0h1.0v1.3h-1.0zM1172.0 224.0h1.0v1.3h-1.0zM1180.0 224.0h1.0v1.3h-1.0zM1172.0 226.0h1.0v1.3h-1.0zM1185.0 226.0h1.0v1.3h-1.0zM1191.0 226.0h2.0v1.3h-2.0zM1171.0 230.0h1.0v1.3h-1.0zM1181.0 230.0h1.0v1.3h-1.0zM1189.0 230.0h1.0v1.3h-1.0zM1194.0 230.0h2.0v1.3h-2.0zM1201.0 230.0h1.0v1.3h-1.0zM1209.0 230.0h2.0v1.3h-2.0zM1214.0 230.0h2.0v1.3h-2.0zM1162.0 232.0h1.0v1.3h-1.0zM1176.0 236.0h2.0v1.3h-2.0zM1198.0 236.0h1.0v1.3h-1.0zM1172.0 238.0h3.0v1.3h-3.0zM1162.0 240.0h1.0v1.3h-1.0zM1178.0 244.0h2.0v1.3h-2.0zM1200.0 244.0h1.0v1.3h-1.0zM1174.0 246.0h3.0v1.3h-3.0zM1162.0 248.0h1.0v1.3h-1.0zM1180.0 254.0h1.0v1.3h-1.0zM1196.0 254.0h1.0v1.3h-1.0zM1210.0 254.0h1.0v1.3h-1.0zM1231.0 254.0h1.0v1.3h-1.0zM1173.0 256.0h1.0v1.3h-1.0zM1181.0 256.0h1.0v1.3h-1.0zM1183.0 256.0h1.0v1.3h-1.0zM1192.0 256.0h1.0v1.3h-1.0zM1162.0 258.0h1.0v1.3h-1.0zM1188.0 288.0h1.0v1.3h-1.0zM1201.0 288.0h1.0v1.3h-1.0zM1222.0 288.0h1.0v1.3h-1.0zM1238.0 288.0h1.0v1.3h-1.0zM1176.0 290.0h1.0v1.3h-1.0zM1169.0 292.0h1.0v1.3h-1.0zM1175.0 292.0h1.0v1.3h-1.0zM1185.0 292.0h1.0v1.3h-1.0zM1193.0 292.0h1.0v1.3h-1.0zM1199.0 292.0h2.0v1.3h-2.0zM1202.0 292.0h1.0v1.3h-1.0zM1211.0 292.0h1.0v1.3h-1.0zM1226.0 292.0h1.0v1.3h-1.0zM1228.0 292.0h1.0v1.3h-1.0zM1210.0 294.0h3.0v1.3h-3.0zM1166.0 296.0h1.0v1.3h-1.0zM1171.0 298.0h1.0v1.3h-1.0zM1188.0 298.0h1.0v1.3h-1.0zM1193.0 298.0h1.0v1.3h-1.0zM1202.0 298.0h1.0v1.3h-1.0zM1208.0 298.0h2.0v1.3h-2.0zM1217.0 298.0h2.0v1.3h-2.0zM1178.0 308.0h1.0v1.3h-1.0zM1183.0 308.0h1.0v1.3h-1.0zM1196.0 308.0h1.0v1.3h-1.0zM1204.0 308.0h2.0v1.3h-2.0zM1162.0 310.0h1.0v1.3h-1.0zM1189.0 336.0h1.0v1.3h-1.0zM1200.0 336.0h1.0v1.3h-1.0zM1216.0 336.0h1.0v1.3h-1.0zM1225.0 336.0h1.0v1.3h-1.0zM1236.0 336.0h1.0v1.3h-1.0zM1162.0 338.0h1.0v1.3h-1.0zM1173.0 338.0h1.0v1.3h-1.0zM1174.0 340.0h1.0v1.3h-1.0zM1171.0 342.0h1.0v1.3h-1.0zM1171.0 344.0h1.0v1.3h-1.0zM1171.0 346.0h1.0v1.3h-1.0zM1173.0 348.0h1.0v1.3h-1.0zM1180.0 348.0h1.0v1.3h-1.0zM1181.0 350.0h1.0v1.3h-1.0zM1187.0 350.0h2.0v1.3h-2.0zM1175.0 352.0h1.0v1.3h-1.0zM1177.0 354.0h1.0v1.3h-1.0zM1188.0 354.0h1.0v1.3h-1.0zM1195.0 354.0h1.0v1.3h-1.0zM1208.0 354.0h1.0v1.3h-1.0zM1210.0 354.0h1.0v1.3h-1.0zM1218.0 354.0h1.0v1.3h-1.0zM1224.0 354.0h2.0v1.3h-2.0zM1229.0 354.0h1.0v1.3h-1.0zM1237.0 354.0h2.0v1.3h-2.0zM1170.0 356.0h1.0v1.3h-1.0zM1166.0 358.0h2.0v1.3h-2.0zM1162.0 360.0h1.0v1.3h-1.0zM1179.0 380.0h1.0v1.3h-1.0zM1187.0 380.0h1.0v1.3h-1.0zM1198.0 380.0h1.0v1.3h-1.0zM1209.0 380.0h1.0v1.3h-1.0zM1231.0 380.0h1.0v1.3h-1.0zM1189.0 382.0h1.0v1.3h-1.0zM1181.0 384.0h1.0v1.3h-1.0zM1188.0 384.0h1.0v1.3h-1.0zM1196.0 384.0h1.0v1.3h-1.0zM1213.0 384.0h1.0v1.3h-1.0zM1236.0 384.0h1.0v1.3h-1.0zM1166.0 386.0h1.0v1.3h-1.0zM1174.0 386.0h3.0v1.3h-3.0zM1179.0 386.0h1.0v1.3h-1.0zM1182.0 386.0h1.0v1.3h-1.0zM1185.0 386.0h2.0v1.3h-2.0zM1169.0 390.0h2.0v1.3h-2.0zM1178.0 390.0h1.0v1.3h-1.0zM1185.0 390.0h2.0v1.3h-2.0zM1188.0 390.0h1.0v1.3h-1.0zM1203.0 392.0h3.0v1.3h-3.0zM1166.0 394.0h1.0v1.3h-1.0zM1166.0 398.0h1.0v1.3h-1.0zM1181.0 398.0h1.0v1.3h-1.0zM1196.0 398.0h1.0v1.3h-1.0zM1215.0 398.0h1.0v1.3h-1.0zM1217.0 398.0h1.0v1.3h-1.0zM1222.0 398.0h1.0v1.3h-1.0zM1229.0 398.0h1.0v1.3h-1.0zM1237.0 398.0h1.0v1.3h-1.0zM1239.0 398.0h1.0v1.3h-1.0zM1247.0 398.0h1.0v1.3h-1.0zM1173.0 400.0h1.0v1.3h-1.0zM1180.0 400.0h3.0v1.3h-3.0zM1166.0 406.0h1.0v1.3h-1.0zM1179.0 406.0h2.0v1.3h-2.0zM1182.0 406.0h1.0v1.3h-1.0zM1190.0 406.0h1.0v1.3h-1.0zM1195.0 406.0h1.0v1.3h-1.0zM1202.0 406.0h1.0v1.3h-1.0zM1210.0 406.0h2.0v1.3h-2.0zM1216.0 406.0h2.0v1.3h-2.0zM1169.0 408.0h2.0v1.3h-2.0zM1178.0 408.0h1.0v1.3h-1.0zM1180.0 408.0h1.0v1.3h-1.0zM1201.0 410.0h3.0v1.3h-3.0zM1166.0 412.0h1.0v1.3h-1.0zM1162.0 414.0h1.0v1.3h-1.0zM1158.0 416.0h1.0v1.3h-1.0z"/><path fill="#c586c0" d="M1158.0 166.0h6.0v1.3h-6.0zM1176.0 166.0h4.0v1.3h-4.0zM1158.0 168.0h6.0v1.3h-6.0zM1178.0 168.0h4.0v1.3h-4.0zM1158.0 170.0h6.0v1.3h-6.0zM1185.0 170.0h4.0v1.3h-4.0zM1158.0 172.0h6.0v1.3h-6.0zM1177.0 172.0h4.0v1.3h-4.0zM1158.0 174.0h6.0v1.3h-6.0zM1175.0 174.0h4.0v1.3h-4.0zM1158.0 176.0h6.0v1.3h-6.0zM1186.0 176.0h4.0v1.3h-4.0zM1158.0 180.0h6.0v1.3h-6.0zM1179.0 180.0h4.0v1.3h-4.0zM1158.0 182.0h6.0v1.3h-6.0zM1177.0 182.0h4.0v1.3h-4.0zM1184.0 218.0h4.0v1.3h-4.0zM1197.0 288.0h4.0v1.3h-4.0zM1166.0 292.0h2.0v1.3h-2.0zM1170.0 294.0h6.0v1.3h-6.0zM1189.0 298.0h4.0v1.3h-4.0zM1179.0 308.0h4.0v1.3h-4.0zM1166.0 390.0h2.0v1.3h-2.0zM1170.0 392.0h6.0v1.3h-6.0zM1166.0 408.0h2.0v1.3h-2.0zM1170.0 410.0h6.0v1.3h-6.0z"/><path fill="#4ec9b0" d="M1167.0 166.0h6.0v1.3h-6.0zM1167.0 168.0h8.0v1.3h-8.0zM1167.0 170.0h15.0v1.3h-15.0zM1167.0 172.0h7.0v1.3h-7.0zM1167.0 174.0h5.0v1.3h-5.0zM1167.0 176.0h16.0v1.3h-16.0zM1167.0 180.0h9.0v1.3h-9.0zM1167.0 182.0h7.0v1.3h-7.0zM1167.0 186.0h12.0v1.3h-12.0zM1183.0 186.0h7.0v1.3h-7.0zM1192.0 186.0h8.0v1.3h-8.0zM1202.0 186.0h15.0v1.3h-15.0zM1168.0 188.0h9.0v1.3h-9.0zM1182.0 188.0h6.0v1.3h-6.0zM1162.0 194.0h7.0v1.3h-7.0zM1162.0 200.0h6.0v1.3h-6.0zM1162.0 202.0h7.0v1.3h-7.0zM1170.0 204.0h7.0v1.3h-7.0zM1189.0 204.0h4.0v1.3h-4.0zM1168.0 210.0h33.0v1.3h-33.0zM1168.0 212.0h26.0v1.3h-26.0zM1168.0 214.0h24.0v1.3h-24.0zM1176.0 218.0h7.0v1.3h-7.0zM1190.0 218.0h7.0v1.3h-7.0zM1202.0 218.0h7.0v1.3h-7.0zM1174.0 222.0h6.0v1.3h-6.0zM1189.0 222.0h7.0v1.3h-7.0zM1178.0 226.0h7.0v1.3h-7.0zM1182.0 230.0h7.0v1.3h-7.0zM1202.0 230.0h7.0v1.3h-7.0zM1181.0 254.0h7.0v1.3h-7.0zM1198.0 254.0h4.0v1.3h-4.0zM1189.0 288.0h7.0v1.3h-7.0zM1203.0 288.0h7.0v1.3h-7.0zM1224.0 288.0h7.0v1.3h-7.0zM1186.0 292.0h7.0v1.3h-7.0zM1177.0 294.0h33.0v1.3h-33.0zM1195.0 298.0h7.0v1.3h-7.0zM1190.0 336.0h7.0v1.3h-7.0zM1202.0 336.0h7.0v1.3h-7.0zM1218.0 336.0h5.0v1.3h-5.0zM1227.0 336.0h7.0v1.3h-7.0zM1238.0 336.0h7.0v1.3h-7.0zM1174.0 350.0h7.0v1.3h-7.0zM1189.0 354.0h6.0v1.3h-6.0zM1211.0 354.0h7.0v1.3h-7.0zM1180.0 380.0h5.0v1.3h-5.0zM1189.0 380.0h7.0v1.3h-7.0zM1200.0 380.0h7.0v1.3h-7.0zM1211.0 380.0h5.0v1.3h-5.0zM1166.0 384.0h7.0v1.3h-7.0zM1183.0 384.0h5.0v1.3h-5.0zM1197.0 384.0h16.0v1.3h-16.0zM1177.0 392.0h26.0v1.3h-26.0zM1167.0 398.0h7.0v1.3h-7.0zM1183.0 398.0h7.0v1.3h-7.0zM1198.0 398.0h5.0v1.3h-5.0zM1240.0 398.0h7.0v1.3h-7.0zM1166.0 400.0h7.0v1.3h-7.0zM1175.0 400.0h5.0v1.3h-5.0zM1167.0 406.0h4.0v1.3h-4.0zM1177.0 410.0h24.0v1.3h-24.0z"/><path fill="#7f6250" d="M1181.0 166.0h48.0v1.3h-48.0zM1183.0 168.0h44.0v1.3h-44.0zM1190.0 170.0h51.0v1.3h-51.0zM1182.0 172.0h44.0v1.3h-44.0zM1180.0 174.0h54.0v1.3h-54.0zM1191.0 176.0h65.0v1.3h-65.0zM1184.0 180.0h57.0v1.3h-57.0zM1182.0 182.0h15.0v1.3h-15.0z"/><path fill="#d4d4d4" d="M1177.0 194.0h13.0v1.3h-13.0zM1186.0 200.0h5.0v1.3h-5.0zM1187.0 202.0h5.0v1.3h-5.0zM1178.0 204.0h7.0v1.3h-7.0zM1194.0 204.0h8.0v1.3h-8.0zM1211.0 204.0h7.0v1.3h-7.0zM1162.0 206.0h6.0v1.3h-6.0zM1198.0 218.0h2.0v1.3h-2.0zM1210.0 218.0h6.0v1.3h-6.0zM1181.0 222.0h6.0v1.3h-6.0zM1201.0 222.0h6.0v1.3h-6.0zM1166.0 224.0h5.0v1.3h-5.0zM1174.0 224.0h6.0v1.3h-6.0zM1166.0 226.0h5.0v1.3h-5.0zM1186.0 226.0h5.0v1.3h-5.0zM1166.0 230.0h5.0v1.3h-5.0zM1211.0 230.0h3.0v1.3h-3.0zM1188.0 236.0h9.0v1.3h-9.0zM1190.0 244.0h9.0v1.3h-9.0zM1189.0 254.0h7.0v1.3h-7.0zM1203.0 254.0h7.0v1.3h-7.0zM1221.0 254.0h9.0v1.3h-9.0zM1166.0 256.0h7.0v1.3h-7.0zM1174.0 256.0h7.0v1.3h-7.0zM1185.0 256.0h7.0v1.3h-7.0zM1211.0 288.0h11.0v1.3h-11.0zM1232.0 288.0h6.0v1.3h-6.0zM1162.0 290.0h13.0v1.3h-13.0zM1170.0 292.0h5.0v1.3h-5.0zM1194.0 292.0h5.0v1.3h-5.0zM1204.0 292.0h6.0v1.3h-6.0zM1213.0 292.0h13.0v1.3h-13.0zM1166.0 298.0h5.0v1.3h-5.0zM1203.0 298.0h5.0v1.3h-5.0zM1211.0 298.0h6.0v1.3h-6.0zM1185.0 308.0h11.0v1.3h-11.0zM1198.0 308.0h6.0v1.3h-6.0zM1198.0 336.0h2.0v1.3h-2.0zM1210.0 336.0h6.0v1.3h-6.0zM1224.0 336.0h1.0v1.3h-1.0zM1235.0 336.0h1.0v1.3h-1.0zM1170.0 342.0h1.0v1.3h-1.0zM1170.0 344.0h1.0v1.3h-1.0zM1170.0 346.0h1.0v1.3h-1.0zM1182.0 350.0h5.0v1.3h-5.0zM1196.0 354.0h12.0v1.3h-12.0zM1219.0 354.0h5.0v1.3h-5.0zM1227.0 354.0h2.0v1.3h-2.0zM1231.0 354.0h6.0v1.3h-6.0zM1186.0 380.0h1.0v1.3h-1.0zM1197.0 380.0h1.0v1.3h-1.0zM1208.0 380.0h1.0v1.3h-1.0zM1224.0 380.0h7.0v1.3h-7.0zM1162.0 382.0h12.0v1.3h-12.0zM1175.0 382.0h13.0v1.3h-13.0zM1174.0 384.0h6.0v1.3h-6.0zM1167.0 386.0h7.0v1.3h-7.0zM1178.0 386.0h1.0v1.3h-1.0zM1181.0 386.0h1.0v1.3h-1.0zM1184.0 386.0h1.0v1.3h-1.0zM1171.0 390.0h7.0v1.3h-7.0zM1179.0 390.0h6.0v1.3h-6.0zM1175.0 398.0h6.0v1.3h-6.0zM1191.0 398.0h5.0v1.3h-5.0zM1211.0 398.0h4.0v1.3h-4.0zM1230.0 398.0h7.0v1.3h-7.0zM1172.0 406.0h7.0v1.3h-7.0zM1184.0 406.0h6.0v1.3h-6.0zM1197.0 406.0h5.0v1.3h-5.0zM1204.0 406.0h5.0v1.3h-5.0zM1212.0 406.0h4.0v1.3h-4.0zM1171.0 408.0h7.0v1.3h-7.0z"/><path fill="#dcdcaa" d="M1168.0 218.0h7.0v1.3h-7.0zM1172.0 230.0h9.0v1.3h-9.0zM1171.0 236.0h5.0v1.3h-5.0zM1166.0 238.0h6.0v1.3h-6.0zM1171.0 244.0h7.0v1.3h-7.0zM1166.0 246.0h8.0v1.3h-8.0zM1171.0 254.0h9.0v1.3h-9.0zM1171.0 288.0h17.0v1.3h-17.0zM1176.0 292.0h9.0v1.3h-9.0zM1172.0 298.0h16.0v1.3h-16.0zM1166.0 304.0h2.0v1.3h-2.0zM1171.0 308.0h7.0v1.3h-7.0zM1171.0 336.0h18.0v1.3h-18.0zM1246.0 336.0h1.0v1.3h-1.0zM1166.0 340.0h8.0v1.3h-8.0zM1174.0 348.0h6.0v1.3h-6.0zM1178.0 354.0h10.0v1.3h-10.0zM1171.0 380.0h8.0v1.3h-8.0zM1189.0 384.0h7.0v1.3h-7.0zM1214.0 384.0h22.0v1.3h-22.0zM1237.0 384.0h9.0v1.3h-9.0zM1223.0 398.0h6.0v1.3h-6.0zM1191.0 406.0h4.0v1.3h-4.0z"/><g stroke="#5b7050" stroke-width="0.9" fill="none"><path d="M1158.8 133.5V157.4" stroke-dasharray="1 0.6"/><path d="M1161 135.4H1224M1161 137.3H1224M1161 153.3H1224M1161 155.3H1224M1162.9 134V157M1165.5 137V153.5M1220.2 137V153.5M1223 134V157"/></g><text x="1166.8" y="150.3" font-family="Liberation Sans" font-weight="bold" font-size="12.5" textLength="52" lengthAdjust="spacingAndGlyphs" fill="none" stroke="#5b7050" stroke-width="0.8">BossBridge</text></svg>
<svg class="abs" style="left:1150px;top:134px" width="130" height="557" viewBox="1150 134 130 557">
<rect x="1158" y="203.8" width="103.5" height="2.2" fill="#4a4a4a"/>
<rect x="1158" y="255.6" width="103.5" height="2.6" fill="#4a4a4a"/>
<rect x="1158" y="389.4" width="103.5" height="2.5" fill="#4a4a4a"/>
<rect x="1155" y="170" width="2" height="2" fill="#587c0c"/>
<rect x="1155" y="180" width="2" height="2.2" fill="#c74e39"/>
<rect x="1155" y="192" width="2" height="6" fill="#1b81a8"/>
<rect x="1155" y="200" width="2" height="8" fill="#1b81a8"/>
<rect x="1155" y="253" width="2" height="2" fill="#1b81a8"/>
<rect x="1155" y="282.5" width="2" height="6.5" fill="#587c0c"/>
<rect x="1155" y="305" width="2" height="2" fill="#587c0c"/>
<rect x="1155" y="404" width="2" height="2" fill="#587c0c"/>
<rect x="1261.5" y="134" width="1" height="557" fill="#363636"/><rect x="1261.5" y="134" width="18.5" height="1" fill="#363636"/>
<rect x="1262" y="541" width="18" height="73.5" fill="#474747"/>
<rect x="1262" y="192.5" width="7" height="8.3" fill="#52722a"/>
<rect x="1262" y="209.7" width="7" height="8.3" fill="#a5413f"/>
<rect x="1262" y="232.2" width="7" height="8.3" fill="#2c6690"/>
<rect x="1262" y="243.9" width="7" height="15.3" fill="#2c6690"/>
<rect x="1269" y="250.3" width="7.5" height="8.9" fill="#a8a8a8"/>
<rect x="1262" y="333.3" width="7" height="8.4" fill="#52722a"/>
<rect x="1269" y="338.9" width="7.4" height="8.3" fill="#a8a8a8"/>
<rect x="1262" y="387.5" width="7" height="10.3" fill="#52722a"/>
<rect x="1262" y="422.8" width="7" height="8.2" fill="#52722a"/>
<rect x="1262" y="559" width="18" height="2" fill="#9a9a9a"/>
<rect x="1269" y="557.2" width="7.4" height="7" fill="#b0b0b0"/>
<rect x="1269" y="567" width="7.4" height="8.3" fill="#a8a8a8"/>
<rect x="1262" y="591" width="7" height="8.4" fill="#52722a"/>
</svg>
<div id="shadow" class="abs"></div>
<svg class="abs" style="left:166px;top:266px" width="20" height="26" viewBox="166 266 20 26"><path d="M172.3 282.2A6.6 6.6 0 1 1 179.3 282.2L178.9 283.8H172.7Z" fill="#f3c52c" stroke="#f0dc8a" stroke-width="0.7"/><rect x="172.5" y="283.4" width="6.6" height="5.7" rx="1.3" fill="#ece3a6"/><rect x="174.2" y="284.6" width="3.1" height="2.8" fill="#1e1e1e"/></svg>
<svg class="abs" style="left:420px;top:310px" width="18" height="26" viewBox="420 310 18 26"><path d="M425.6 315.8Q427.8 315.8 429.3 317.5Q430.8 315.8 433 315.8M429.3 317.5V330.3M425.6 332Q427.8 332 429.3 330.3Q430.8 332 433 332" stroke="#f4f4f4" stroke-width="3.2" fill="none" stroke-linecap="round"/><path d="M425.6 315.8Q427.8 315.8 429.3 317.5Q430.8 315.8 433 315.8M429.3 317.5V330.3M425.6 332Q427.8 332 429.3 330.3Q430.8 332 433 332" stroke="#3a3a3a" stroke-width="1" fill="none" stroke-linecap="round"/></svg>

<div id="status" class="abs">
<div class="abs" style="left:0;top:0;width:48px;height:29px;background:#3f845b"></div>
</div>
<svg class="abs" style="left:0;top:691px" width="1280" height="29" viewBox="0 691 1280 29">
<g stroke="#ffffff" stroke-width="1.5" fill="none" stroke-linecap="round" stroke-linejoin="round">
<path d="M16.6 703.6L22 708.8L16.6 714M28.2 698.6L22.9 703.7L28.2 708.8"/>
<circle cx="61.6" cy="699.8" r="2.5"/><circle cx="61.6" cy="713.8" r="2.5"/><circle cx="70.6" cy="703.4" r="2.5"/>
<path d="M61.6 702.3V711.3M70.6 705.9Q70.6 709.3 66 709.3H61.6"/>
<path d="M151.3 706.2A7.5 7.3 0 0 1 166.3 705.4M166.3 707.4A7.5 7.3 0 0 1 151.3 708.2"/>
<path d="M163.5 702.9L166.3 706L169.1 702.9M148.5 711.2L151.3 708L154.1 711.2"/>
<path d="M191.5 700.8V712.8M186.8 708.2L191.5 712.8L196.2 708.2M221 713V701M216.3 705.6L221 701L225.7 705.6"/>
<circle cx="257.8" cy="706.7" r="8.3"/>
<path d="M253.9 702.8L261.7 710.6M261.7 702.8L253.9 710.6"/>
<path d="M299.3 698.3L307.5 714.2H291.1Z"/>
<path d="M299.3 703.5V709"/>
<path d="M409.5 709.5Q411 700.5 421 700.5V697.8L427.6 703.3L421 708.2V705.3Q414 705 409.5 709.5Z"/>
<circle cx="416.9" cy="712.4" r="3.2"/>
<path d="M359.4 704.5L355 714.8M359.4 704.5L363.8 714.8M356.5 711H362.3"/>
<path d="M354.5 699.5Q352.3 702.5 354.5 705.5M364.3 699.5Q366.5 702.5 364.3 705.5M351.8 698.2Q348.3 702.5 351.8 707M367 698.2Q370.5 702.5 367 707"/>
<path d="M1260 0"/>
<path d="M1092 711.5A6.8 6.8 0 1 1 1101 711.5M1093.8 708.8A4 4 0 1 1 1099.2 708.8"/>
<path d="M1243.3 712.6Q1244.8 711 1244.8 706Q1244.8 698.6 1250.2 698.6Q1255.6 698.6 1255.6 706Q1255.6 711 1257.1 712.6Z"/><path d="M1248.3 713.4Q1248.3 715.3 1250.2 715.3Q1252.1 715.3 1252.1 713.4"/>
</g>
<g fill="#ffffff"><circle cx="299.3" cy="711.6" r="0.9"/><circle cx="359.4" cy="702.5" r="1.6"/><circle cx="1096.5" cy="705.4" r="1.9"/><rect x="1095.2" y="707.5" width="2.6" height="8" rx="1.2"/></g>
<g stroke="#fff" stroke-width="1.8" fill="none"><circle cx="1202.6" cy="703.4" r="3.6"/><circle cx="1210.6" cy="703.4" r="3.6"/></g>
<path d="M1197 710Q1196.5 707.2 1199.8 707H1213.4Q1216.8 707.2 1216.4 710V712.3Q1216 716.8 1206.7 716.8Q1197.4 716.8 1197 712.3Z" fill="#fff"/>
<rect x="1200.3" y="708.9" width="12.8" height="5.7" rx="2.2" fill="#3778c8"/>
<g fill="#fff"><rect x="1204" y="710" width="1.5" height="3.3" rx="0.7"/><rect x="1207.9" y="710" width="1.5" height="3.3" rx="0.7"/></g>
</svg>
<div class="abs st" style="left:82px;">main*+</div>
<div class="abs st" style="left:173px;">0</div>
<div class="abs st" style="left:204px;">1</div>
<div class="abs st" style="left:274px;">1</div>
<div class="abs st" style="left:314px;">0</div>
<div class="abs st" style="left:374px;">0</div>
<div class="abs st" style="left:434px;">Live Share</div>
<div class="abs st" style="left:754px;letter-spacing:0.35px">Spaces: 4</div>
<div class="abs st" style="left:859.5px;letter-spacing:0.9px">UTF-8</div>
<div class="abs st" style="left:935px;">LF</div>
<div class="abs st" style="left:979px;font-size:16px;letter-spacing:0.6px">{ }</div>
<div class="abs st" style="left:1004px;letter-spacing:0.6px">Solidity</div>
<div class="abs st" style="left:1111px;">Go Live</div>

</body></html>
